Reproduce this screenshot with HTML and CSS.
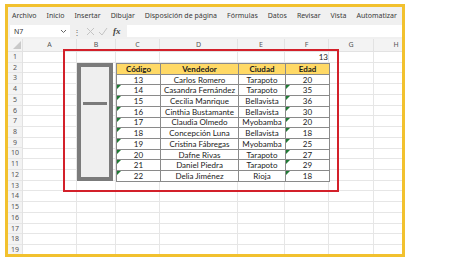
FILE: index.html
```html
<!DOCTYPE html>
<html lang="es">
<head>
    <meta charset="UTF-8">
    <title>Libro1 - Excel</title>
    <link rel="stylesheet" href="styles.css">
</head>
<body>
    <div class="frame">
        <div class="menu">
            <span>Archivo</span>
            <span>Inicio</span>
            <span>Insertar</span>
            <span>Dibujar</span>
            <span>Disposición de página</span>
            <span>Fórmulas</span>
            <span>Datos</span>
            <span>Revisar</span>
            <span>Vista</span>
            <span>Automatizar</span>
        </div>
        <div class="fbar">
            <div class="namebox">
                <span>N7</span>
                <svg width="7" height="5" viewBox="0 0 7 5"><path d="M1 1l2.5 2.5L6 1" fill="none" stroke="#666" stroke-width="1"/></svg>
            </div>
            <span class="dots">⋮</span>
            <svg class="ico" width="9" height="9" viewBox="0 0 9 9"><path d="M1 1l7 7M8 1L1 8" stroke="#c4c4c4" stroke-width="1"/></svg>
            <svg class="ico" width="10" height="9" viewBox="0 0 10 9"><path d="M1 5l3 3 5-7" fill="none" stroke="#c4c4c4" stroke-width="1"/></svg>
            <span class="fx">fx</span>
            <div class="finput"></div>
        </div>
        <div class="sheet">
            <div class="corner"><svg width="8" height="8" viewBox="0 0 8 8"><path d="M8 0v8H0z" fill="#c9c9c9"/></svg></div>
            <div class="colhead">
                <span class="w-a">A</span>
                <span class="w-b">B</span>
                <span class="w-c">C</span>
                <span class="w-d">D</span>
                <span class="w-e">E</span>
                <span class="w-f">F</span>
                <span class="w-g">G</span>
                <span class="w-h">H</span>
            </div>
            <div class="rowhead">
                <span>1</span><span>2</span><span>3</span><span>4</span><span>5</span>
                <span>6</span><span>7</span><span>8</span><span>9</span><span>10</span>
                <span>11</span><span>12</span><span>13</span><span>14</span><span>15</span>
                <span>16</span><span>17</span><span>18</span><span>19</span>
            </div>
            <div class="cells">
                <div class="col w-a"></div>
                <div class="col w-b"></div>
                <div class="col w-c"></div>
                <div class="col w-d"></div>
                <div class="col w-e"></div>
                <div class="col w-f"></div>
                <div class="col w-g"></div>
                <div class="col w-h"></div>
            </div>

            <div class="callout">
                <div class="total">13</div>
                <div class="block">
                    <div class="scroller"><div class="thumb"></div></div>
                    <table class="datos">
                        <colgroup>
                            <col class="w-c"><col class="w-d"><col class="w-e"><col class="w-f">
                        </colgroup>
                        <tr class="head"><th>Código</th><th>Vendedor</th><th>Ciudad</th><th>Edad</th></tr>
                        <tr><td>13</td><td>Carlos Romero</td><td>Tarapoto</td><td>20</td></tr>
                        <tr><td class="t">14</td><td>Casandra Fernández</td><td>Tarapoto</td><td class="t">35</td></tr>
                        <tr><td class="t">15</td><td>Cecilia Manrique</td><td>Bellavista</td><td class="t">36</td></tr>
                        <tr><td class="t">16</td><td>Cinthia Bustamante</td><td>Bellavista</td><td class="t">30</td></tr>
                        <tr><td class="t">17</td><td>Claudia Olmedo</td><td>Myobamba</td><td class="t">20</td></tr>
                        <tr><td class="t">18</td><td>Concepción Luna</td><td>Bellavista</td><td class="t">18</td></tr>
                        <tr><td class="t">19</td><td>Cristina Fábregas</td><td>Myobamba</td><td class="t">25</td></tr>
                        <tr><td class="t">20</td><td>Dafne Rivas</td><td>Tarapoto</td><td class="t">27</td></tr>
                        <tr><td class="t">21</td><td>Daniel Piedra</td><td>Tarapoto</td><td class="t">29</td></tr>
                        <tr><td class="t">22</td><td>Delia Jiménez</td><td>Rioja</td><td class="t">18</td></tr>
                    </table>
                </div>
            </div>
        </div>
    </div>
</body>
</html>
```

FILE: styles.css
```css
body {
    margin: 0;
    background-color: #ffffff;
    font-family: 'Noto Sans', 'Open Sans', sans-serif;
    color: #333;
}
.frame {
    margin: 4px 0 0 5px;
    width: 394px;
    height: 247px;
    border: 3px solid #f2c12e;
    overflow: hidden;
    background-color: #fff;
}

/* ribbon tabs */
.menu {
    height: 16px;
    display: flex;
    align-items: center;
    gap: 10px;
    padding-left: 4px;
    background-color: #f0f0f0;
    font-size: 7px;
    color: #3a3a3a;
    white-space: nowrap;
}

/* formula bar */
.fbar {
    height: 16px;
    display: flex;
    align-items: center;
    background-color: #f0f0f0;
    padding-left: 2px;
}
.namebox {
    width: 60px;
    height: 12px;
    background-color: #fff;
    display: flex;
    align-items: center;
    justify-content: space-between;
    padding: 0 3px 0 4px;
    box-sizing: border-box;
    font-size: 7px;
    color: #333;
}
.fbar .dots {
    width: 12px;
    text-align: center;
    font-size: 8px;
    color: #666;
    margin-left: 1px;
}
.fbar .ico {
    margin-left: 3px;
}
.fx {
    font-family: 'Liberation Serif', serif;
    font-style: italic;
    font-weight: bold;
    font-size: 9px;
    color: #444;
    margin-left: 5px;
    width: 10px;
}
.finput {
    flex: 1;
    height: 12px;
    margin-left: 4px;
    background-color: #fff;
}

/* grid */
.sheet {
    position: relative;
    display: grid;
    grid-template-columns: 15px 1fr;
    grid-template-rows: 13px 1fr;
    height: 215px;
    font-size: 7px;
    color: #555;
}
.corner {
    background-color: #f3f3f3;
    display: flex;
    align-items: flex-end;
    justify-content: flex-end;
    padding: 0 1px 2px 0;
    border-right: 1px solid #e2e2e2;
    border-bottom: 1px solid #e2e2e2;
    box-sizing: border-box;
}
.colhead {
    display: flex;
    background-color: #f3f3f3;
    border-bottom: 1px solid #e2e2e2;
    white-space: nowrap;
}
.colhead span {
    flex: none;
    text-align: center;
    line-height: 12px;
    border-right: 1px solid #e2e2e2;
    box-sizing: border-box;
}
.rowhead {
    display: flex;
    flex-direction: column;
    background-color: #f3f3f3;
    border-right: 1px solid #e2e2e2;
}
.rowhead span {
    flex: none;
    height: 10.73px;
    line-height: 10.73px;
    text-align: center;
    border-bottom: 1px solid #e6e6e6;
    box-sizing: border-box;
}
.cells {
    display: flex;
    background: repeating-linear-gradient(to bottom, #fff 0, #fff 9.73px, #e6e6e6 9.73px, #e6e6e6 10.73px);
}
.col {
    flex: none;
    border-right: 1px solid #e6e6e6;
    box-sizing: border-box;
}
.w-a { width: 54px; }
.w-b { width: 39px; }
.w-c { width: 44px; }
.w-d { width: 78px; }
.w-e { width: 47px; }
.w-f { width: 44px; }
.w-g { width: 45px; }
.w-h { width: 45px; }

/* red highlight with the pasted table */
.callout {
    position: absolute;
    left: 55px;
    top: 10px;
    width: 276px;
    height: 143px;
    border: 2px solid #d3202a;
    box-sizing: border-box;
    padding: 1px 0 0 12px;
    font-family: 'Lato', 'Liberation Sans', sans-serif;
    color: #222;
}
.total {
    width: 251px;
    height: 11px;
    line-height: 11px;
    text-align: right;
    font-size: 8px;
}
.block {
    display: flex;
    align-items: flex-start;
    gap: 3px;
}
.scroller {
    width: 36px;
    height: 118px;
    border: 4px solid #7b7b7b;
    background-color: #efefef;
    box-sizing: border-box;
    padding: 35px 2px 0;
}
.thumb {
    height: 3px;
    background-color: #7b7b7b;
}
.datos {
    width: 213px;
    table-layout: fixed;
    border-collapse: collapse;
    font-size: 8px;
    background-color: #fff;
}
.datos tr {
    height: 10.73px;
}
.datos th, .datos td {
    height: 9.7px;
    padding: 0;
    line-height: 8px;
    text-align: center;
    border: 1px solid #8a8a8a;
    white-space: nowrap;
    overflow: hidden;
}
.datos th {
    background-color: #ffd966;
    font-weight: bold;
    color: #1a1a1a;
}
.datos td.t {
    position: relative;
}
.datos td.t::before {
    content: "";
    position: absolute;
    left: 0;
    top: 0;
    border-top: 4px solid #1f7a35;
    border-right: 4px solid transparent;
}
```
